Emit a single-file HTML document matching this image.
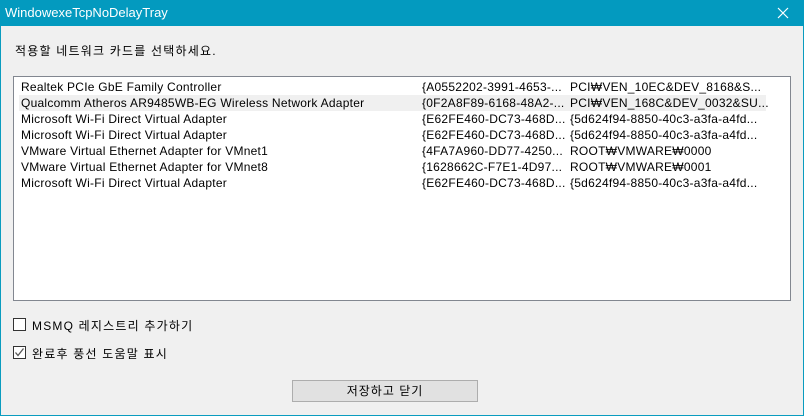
<!DOCTYPE html>
<html><head><style>
*{margin:0;padding:0;box-sizing:border-box}
body{width:804px;height:416px;background:#f0f0f0;font-family:"Liberation Sans","Noto Sans CJK KR",sans-serif;font-size:12px;color:#000;position:relative;overflow:hidden}
.win{position:absolute;left:0;top:0;width:804px;height:416px;border:1px solid #0a9cbf;border-top:none}
.title{position:absolute;left:0;top:0;width:804px;height:26px;background:#039abf;color:#fff;font-size:13px;line-height:26px;padding-left:5px}
.x{position:absolute;right:14px;top:6px;width:14px;height:14px}
.t{position:absolute;white-space:nowrap}
.k{letter-spacing:1.2px}
.list{position:absolute;left:13px;top:76px;width:778px;height:225px;background:#fff;border:1px solid #828790;letter-spacing:0.25px}
.row{position:absolute;left:0;height:16px;line-height:16px;width:776px}
.row span{position:absolute;white-space:nowrap}
.sel{background:#f0f0f0;left:5px;width:747px}
.cb{position:absolute;width:13px;height:13px;border:1px solid #333;background:#fff}
.btn{position:absolute;left:292px;top:380px;width:186px;height:22px;background:#e1e1e1;border:1px solid #adadad;text-align:center;line-height:20px;letter-spacing:1px}
</style></head><body>
<div class="win"></div>
<div class="title">WindowexeTcpNoDelayTray
<svg class="x" viewBox="0 0 14 14"><path d="M2 2L12 12M12 2L2 12" stroke="#fff" stroke-width="1.2"/></svg></div>
<div class="t k" style="left:15px;top:42px">적용할 네트워크 카드를 선택하세요.</div>
<div class="list">
<div class="row" style="top:2px"><span style="left:7px">Realtek PCIe GbE Family Controller</span><span style="left:408px">{A0552202-3991-4653-...</span><span style="left:556px">PCI₩VEN_10EC&amp;DEV_8168&amp;S...</span></div>
<div class="row sel" style="top:18px"></div>
<div class="row" style="top:18px"><span style="left:7px">Qualcomm Atheros AR9485WB-EG Wireless Network Adapter</span><span style="left:408px">{0F2A8F89-6168-48A2-...</span><span style="left:556px">PCI₩VEN_168C&amp;DEV_0032&amp;SU...</span></div>
<div class="row" style="top:34px"><span style="left:7px">Microsoft Wi-Fi Direct Virtual Adapter</span><span style="left:408px">{E62FE460-DC73-468D...</span><span style="left:556px">{5d624f94-8850-40c3-a3fa-a4fd...</span></div>
<div class="row" style="top:50px"><span style="left:7px">Microsoft Wi-Fi Direct Virtual Adapter</span><span style="left:408px">{E62FE460-DC73-468D...</span><span style="left:556px">{5d624f94-8850-40c3-a3fa-a4fd...</span></div>
<div class="row" style="top:66px"><span style="left:7px">VMware Virtual Ethernet Adapter for VMnet1</span><span style="left:408px">{4FA7A960-DD77-4250...</span><span style="left:556px">ROOT₩VMWARE₩0000</span></div>
<div class="row" style="top:82px"><span style="left:7px">VMware Virtual Ethernet Adapter for VMnet8</span><span style="left:408px">{1628662C-F7E1-4D97...</span><span style="left:556px">ROOT₩VMWARE₩0001</span></div>
<div class="row" style="top:98px"><span style="left:7px">Microsoft Wi-Fi Direct Virtual Adapter</span><span style="left:408px">{E62FE460-DC73-468D...</span><span style="left:556px">{5d624f94-8850-40c3-a3fa-a4fd...</span></div>
</div>
<div class="cb" style="left:13px;top:318px"></div>
<div class="t k" style="left:32px;top:317px">MSMQ 레지스트리 추가하기</div>
<div class="cb" style="left:13px;top:346px"><svg width="11" height="11" viewBox="0 0 11 11" style="position:absolute;left:0;top:0"><path d="M1.5 5.5L4 8.5L9.5 1.5" stroke="#555" stroke-width="1.3" fill="none"/></svg></div>
<div class="t k" style="left:32px;top:345px">완료후 풍선 도움말 표시</div>
<div class="btn">저장하고 닫기</div>
</body></html>
